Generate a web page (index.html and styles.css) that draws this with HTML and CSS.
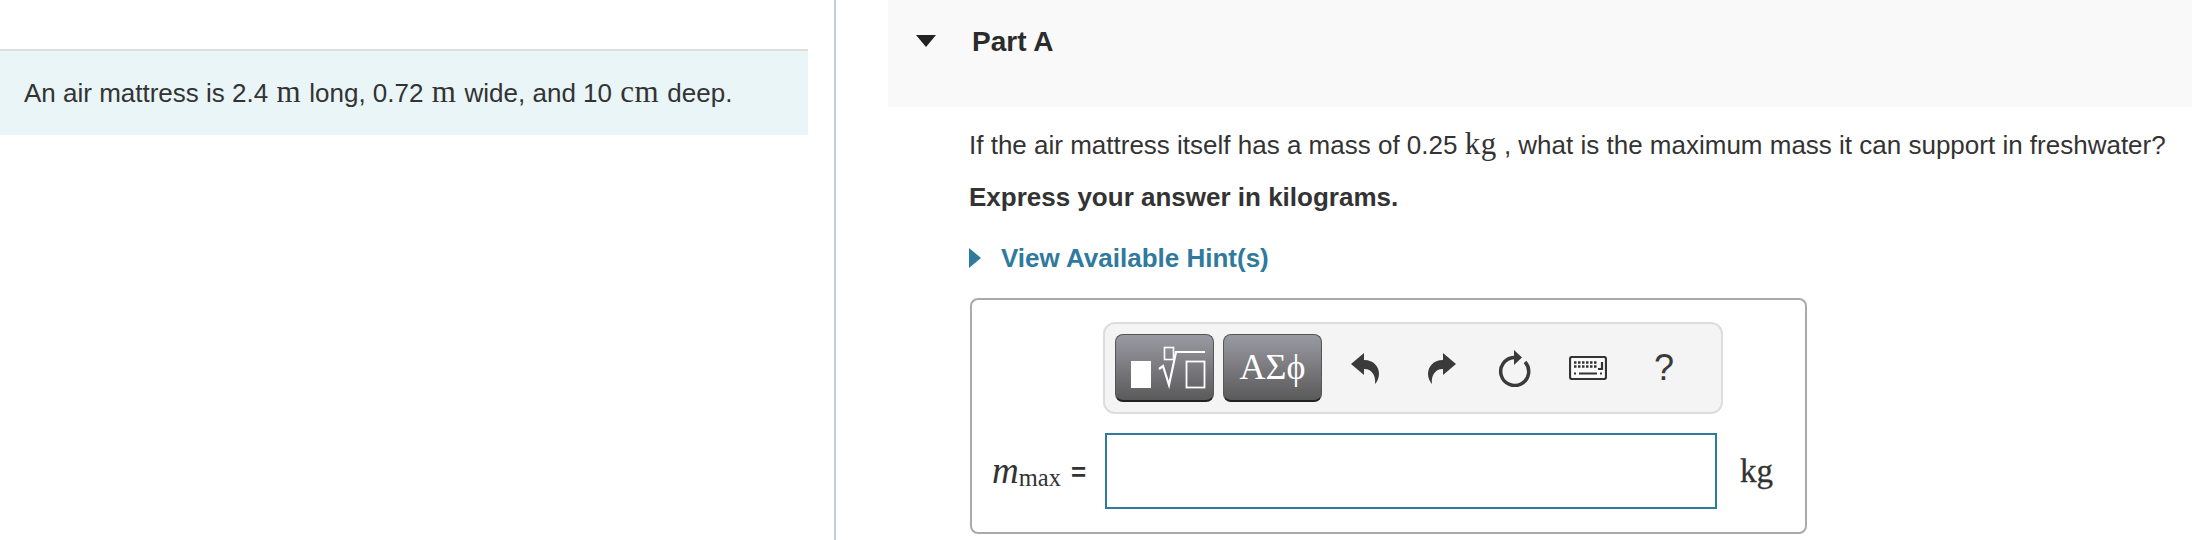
FILE: index.html
```html
<!DOCTYPE html>
<html>
<head>
    <meta charset="utf-8">
    <title>Part A</title>
    <link rel="stylesheet" href="styles.css">
</head>
<body>
    <div class="left-pane">
        <div class="intro">An air mattress is 2.4 <span class="math">m</span> long, 0.72 <span class="math">m</span> wide, and 10 <span class="math">cm</span> deep.</div>
    </div>

    <div class="right-pane">
        <div class="part-header">
            <span class="arrow-down"></span>
            <h2>Part A</h2>
        </div>

        <div class="part-body">
            <p class="question">If the air mattress itself has a mass of 0.25 <span class="math">kg</span> , what is the maximum mass it can support in freshwater?</p>
            <p class="express">Express your answer in kilograms.</p>
            <div class="hint"><span class="arrow-right"></span>View Available Hint(s)</div>

            <div class="answer-box">
                <div class="toolbar">
                    <div class="tool-btn">
                        <svg width="99" height="68" viewBox="0 0 99 68">
                            <rect x="16" y="27" width="20" height="27" fill="#fff"/>
                            <rect x="49.500" y="13.500" width="9" height="12" fill="none" stroke="#fff" stroke-width="1.600"/>
                            <path d="M44 35 L48 32 L54 51 L61 18 H90" fill="none" stroke="#fff" stroke-width="2.200"/>
                            <rect x="71.500" y="27.500" width="18" height="26" fill="none" stroke="#fff" stroke-width="1.800"/>
                        </svg>
                    </div>
                    <div class="tool-btn tool-greek">ΑΣϕ</div>
                    <svg class="icon icon-undo" width="28" height="31" viewBox="0 0 28 31">
                        <path d="M0 11 L13 0 V7 C23 7 28 14 28 21 C28 25 26 29 24 31 C25 24 22 16 13 16 V22 Z" fill="#3a3a3a"/>
                    </svg>
                    <svg class="icon icon-redo" width="28" height="31" viewBox="0 0 28 31">
                        <path d="M28 11 L15 0 V7 C5 7 0 14 0 21 C0 25 2 29 4 31 C3 24 6 16 15 16 V22 Z" fill="#3a3a3a"/>
                    </svg>
                    <svg class="icon icon-reload" width="33" height="37" viewBox="0 0 33 37">
                        <path d="M16 7.500 A14 14 0 1 0 27 12" fill="none" stroke="#3a3a3a" stroke-width="3.500"/>
                        <path d="M16 0 L24 7.500 L16 15 Z" fill="#3a3a3a"/>
                    </svg>
                    <svg class="icon icon-keys" width="38" height="24" viewBox="0 0 38 24">
                        <rect x="1" y="1" width="36" height="22" rx="2" fill="#fafafa" stroke="#333" stroke-width="2.200"/>
                        <path d="M5 6.500 H28 M5 10.500 H28" stroke="#333" stroke-width="2.500" stroke-dasharray="2.500 1.500" fill="none"/>
                        <path d="M33 6 V13 H29" stroke="#333" stroke-width="2.200" fill="none"/>
                        <path d="M5 17.500 H7 M10 17.500 H28 M31 17.500 H33" stroke="#333" stroke-width="2.200"/>
                    </svg>
                    <span class="icon-help">?</span>
                </div>

                <div class="answer-row">
                    <span class="answer-label"><i>m</i><sub>max</sub><span class="equals">=</span></span>
                    <div class="answer-input"></div>
                    <span class="answer-unit">kg</span>
                </div>
            </div>
        </div>
    </div>
</body>
</html>
```

FILE: styles.css
```css
html, body {
    height: 100%;
}

body {
    margin: 0;
    display: flex;
    overflow: hidden;
    background-color: #fff;
    color: #333;
    font-family: "Liberation Sans", Arial, sans-serif;
    font-size: 26px;
}

.math {
    font-family: "Liberation Serif", serif;
    font-size: 31px;
    line-height: 1;
    letter-spacing: 0.5px;
}

/* Left column */
.left-pane {
    width: 836px;
    flex-shrink: 0;
    padding: 49px 26px 0 0;
    box-sizing: border-box;
    border-right: 2px solid #c6cbd8;
}

.intro {
    height: 86px;
    box-sizing: border-box;
    padding-left: 24px;
    line-height: 84px;
    background-color: #e9f5f7;
    border-top: 2px solid #dedede;
}

.intro .math {
    margin: 0 1px;
}

/* Right column */
.right-pane {
    flex: 1;
    padding-left: 52px;
}

.part-header {
    height: 107px;
    display: flex;
    align-items: flex-start;
    background-color: #f9f9f9;
}

.arrow-down {
    width: 0;
    height: 0;
    margin: 35px 0 0 28px;
    border-left: 10.500px solid transparent;
    border-right: 10.500px solid transparent;
    border-top: 12px solid #222;
}

.part-header h2 {
    margin: 26px 0 0 36px;
    font-size: 28px;
    line-height: 32px;
    color: #2b2b2b;
}

.part-body {
    padding: 20px 0 0 81px;
}

.question {
    margin: 0;
    line-height: 36px;
    white-space: nowrap;
}

.express {
    margin: 16px 0 0;
    line-height: 36px;
    font-weight: bold;
}

.hint {
    display: flex;
    align-items: center;
    margin-top: 25px;
    line-height: 36px;
    font-weight: bold;
    color: #2f7a9d;
}

.arrow-right {
    width: 0;
    height: 0;
    margin-right: 20px;
    border-top: 10.500px solid transparent;
    border-bottom: 10.500px solid transparent;
    border-left: 12px solid #2f7a9d;
}

/* Answer box */
.answer-box {
    width: 837px;
    height: 236px;
    margin: 22px 0 0 1px;
    box-sizing: border-box;
    padding: 22px 0 0 131px;
    border: 2px solid #aaa;
    border-radius: 8px;
}

.toolbar {
    display: flex;
    align-items: center;
    width: 620px;
    height: 92px;
    box-sizing: border-box;
    padding-left: 10px;
    background-color: #f4f4f4;
    border: 2px solid #ddd;
    border-radius: 12px;
}

.tool-btn {
    width: 99px;
    height: 68px;
    box-sizing: border-box;
    margin-right: 9px;
    overflow: hidden;
    background: linear-gradient(#9a9aa3, #5a5a5a);
    border: 1px solid #555;
    border-bottom: 2px solid #222;
    border-radius: 8px;
}

.tool-btn svg {
    display: block;
    margin: -1px;
}

.tool-greek {
    color: #fff;
    font-family: "Liberation Serif", serif;
    font-size: 36px;
    line-height: 64px;
    text-align: center;
}

.icon {
    flex-shrink: 0;
}

.icon-undo {
    margin-left: 20px;
}

.icon-redo {
    margin-left: 49px;
}

.icon-reload {
    margin-left: 42px;
}

.icon-keys {
    margin-left: 38px;
}

.icon-help {
    margin-left: 47px;
    font-size: 36px;
    color: #3a3a3a;
}

.answer-row {
    display: flex;
    align-items: center;
    height: 76px;
    margin: 19px 0 0 -131px;
    padding-left: 20px;
}

.answer-label {
    width: 113px;
    flex-shrink: 0;
    font-family: "Liberation Serif", serif;
    font-size: 37px;
    line-height: 40px;
}

.answer-label sub {
    font-size: 24.500px;
    line-height: 0;
    vertical-align: -3px;
}

.equals {
    margin-left: 10px;
    font-family: "Liberation Sans", sans-serif;
    font-size: 26px;
    font-weight: bold;
    vertical-align: 2px;
}

.answer-input {
    width: 612px;
    height: 76px;
    box-sizing: border-box;
    border: 2px solid #2f7a9d;
}

.answer-unit {
    margin-left: 23px;
    font-family: "Liberation Serif", serif;
    font-size: 33px;
    -webkit-text-stroke: 0.3px #333;
}
```
